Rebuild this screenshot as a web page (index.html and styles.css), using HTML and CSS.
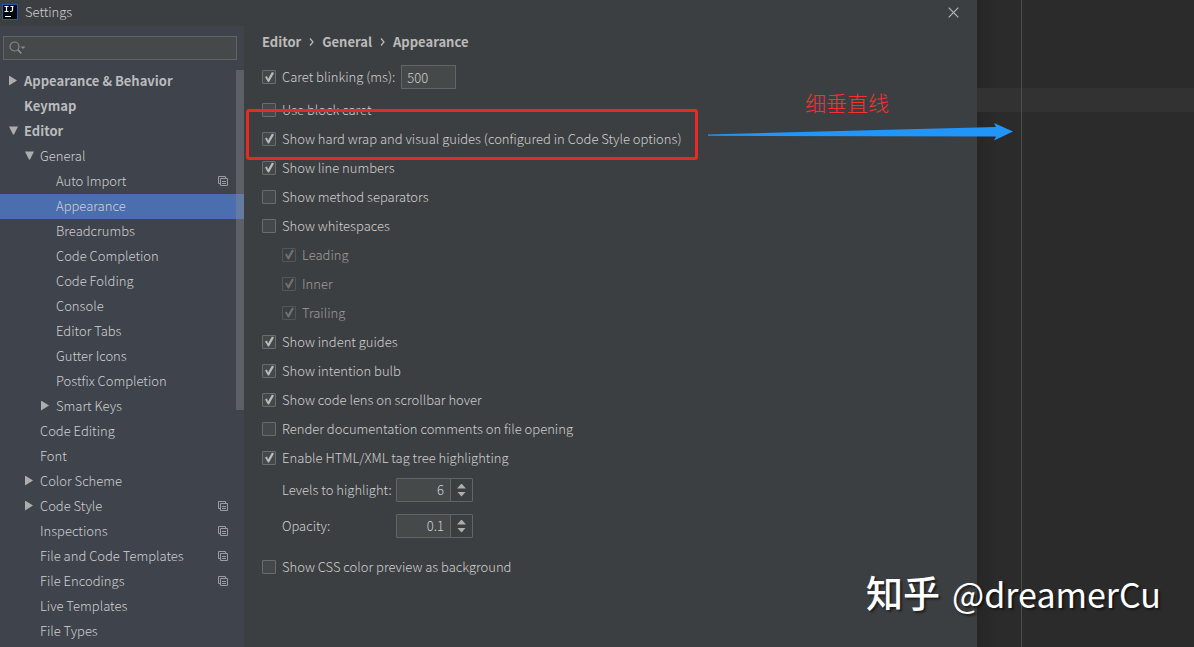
FILE: index.html
```
<!DOCTYPE html>
<html lang="en">
<head>
    <meta charset="UTF-8">
    <title>Settings</title>
    <meta name="viewport" content="width=device-width, initial-scale=1.0">
    <link rel="stylesheet" href="styles.css">
</head>
<body>
<svg class="defs" width="0" height="0">
    <symbol id="copy" viewBox="0 0 10 10">
        <path d="M2 7.5H.5V.5h7V2M2.5 2.5h7v7h-7zM4 5.5h4M4 7.5h4" fill="none" stroke="currentColor"/>
    </symbol>
</svg>
<div class="screen">
    <div class="dialog">
        <div class="titlebar">
            <svg class="logo" width="16" height="16" viewBox="0 0 16 16">
                <rect width="16" height="16" fill="#1f5fae"/>
                <rect x="1" y="1" width="14" height="14" fill="#05080f"/>
                <path d="M2.500 2.500h4M4.500 2.500v5M2.500 7.500h4M8.500 2.500h3M10.500 2v4q0 1.500-1.500 1.500H8M3 12.500h6" fill="none" stroke="#fff" stroke-width="1.200"/>
            </svg>
            <span class="title">Settings</span>
            <button class="close" aria-label="Close">
                <svg width="11" height="11" viewBox="0 0 11 11"><path d="M.7.7l9.600 9.600M10.300.7L.7 10.300" stroke="#b4b7b9" stroke-width="1.200"/></svg>
            </button>
        </div>
        <div class="main">
            <div class="sidebar">
                <div class="search">
                    <svg width="18" height="14" viewBox="0 0 18 14">
                        <circle cx="5.500" cy="5.500" r="4.500" fill="none" stroke="#87898b" stroke-width="1.200"/>
                        <path d="M8.700 8.700L12.300 12.300" stroke="#87898b" stroke-width="1.800"/>
                        <path d="M11.500 5.500h5L14 8z" fill="#87898b"/>
                    </svg>
                    <input type="text" aria-label="Search settings">
                </div>
                <div class="tree">
                    <ul>
                        <li><a href="#" class="lv1 closed">Appearance &amp; Behavior</a></li>
                        <li><a href="#" class="lv1">Keymap</a></li>
                        <li><a href="#" class="lv1 opened">Editor</a></li>
                        <li><a href="#" class="lv2 opened">General</a></li>
                        <li><a href="#" class="lv3">Auto Import<svg class="copy"><use href="#copy"/></svg></a></li>
                        <li><a href="#" class="lv3 active">Appearance</a></li>
                        <li><a href="#" class="lv3">Breadcrumbs</a></li>
                        <li><a href="#" class="lv3">Code Completion</a></li>
                        <li><a href="#" class="lv3">Code Folding</a></li>
                        <li><a href="#" class="lv3">Console</a></li>
                        <li><a href="#" class="lv3">Editor Tabs</a></li>
                        <li><a href="#" class="lv3">Gutter Icons</a></li>
                        <li><a href="#" class="lv3">Postfix Completion</a></li>
                        <li><a href="#" class="lv3 closed">Smart Keys</a></li>
                        <li><a href="#" class="lv2">Code Editing</a></li>
                        <li><a href="#" class="lv2">Font</a></li>
                        <li><a href="#" class="lv2 closed">Color Scheme</a></li>
                        <li><a href="#" class="lv2 closed">Code Style<svg class="copy"><use href="#copy"/></svg></a></li>
                        <li><a href="#" class="lv2">Inspections<svg class="copy"><use href="#copy"/></svg></a></li>
                        <li><a href="#" class="lv2">File and Code Templates<svg class="copy"><use href="#copy"/></svg></a></li>
                        <li><a href="#" class="lv2">File Encodings<svg class="copy"><use href="#copy"/></svg></a></li>
                        <li><a href="#" class="lv2">Live Templates</a></li>
                        <li><a href="#" class="lv2">File Types</a></li>
                    </ul>
                    <div class="scrollbar"></div>
                </div>
            </div>
            <div class="content">
                <div class="crumbs">
                    <span>Editor</span>
                    <svg width="5" height="8" viewBox="0 0 5 8"><path d="M1 .5L4 4 1 7.500" fill="none" stroke="#bbb" stroke-width="1.200"/></svg>
                    <span>General</span>
                    <svg width="5" height="8" viewBox="0 0 5 8"><path d="M1 .5L4 4 1 7.500" fill="none" stroke="#bbb" stroke-width="1.200"/></svg>
                    <span>Appearance</span>
                </div>
                <div class="caret">
                    <label class="option"><input type="checkbox" checked>Caret blinking (ms):</label>
                    <input type="text" class="field" value="500" aria-label="Caret blinking (ms)">
                </div>
                <label class="option"><input type="checkbox">Use block caret</label>
                <label class="option"><input type="checkbox" checked>Show hard wrap and visual guides (configured in Code Style options)</label>
                <label class="option"><input type="checkbox" checked>Show line numbers</label>
                <label class="option"><input type="checkbox">Show method separators</label>
                <label class="option"><input type="checkbox">Show whitespaces</label>
                <div class="sub">
                    <label class="option"><input type="checkbox" checked disabled>Leading</label>
                    <label class="option"><input type="checkbox" checked disabled>Inner</label>
                    <label class="option"><input type="checkbox" checked disabled>Trailing</label>
                </div>
                <label class="option"><input type="checkbox" checked>Show indent guides</label>
                <label class="option"><input type="checkbox" checked>Show intention bulb</label>
                <label class="option"><input type="checkbox" checked>Show code lens on scrollbar hover</label>
                <label class="option"><input type="checkbox">Render documentation comments on file opening</label>
                <label class="option"><input type="checkbox" checked>Enable HTML/XML tag tree highlighting</label>
                <div class="sub spinners">
                    <label for="levels">Levels to highlight:</label>
                    <div class="spinner">
                        <input type="text" id="levels" value="6">
                        <div class="arrows">
                            <button class="up" aria-label="More levels"></button>
                            <button class="down" aria-label="Fewer levels"></button>
                        </div>
                    </div>
                    <label for="opacity">Opacity:</label>
                    <div class="spinner">
                        <input type="text" id="opacity" value="0.1">
                        <div class="arrows">
                            <button class="up" aria-label="More opacity"></button>
                            <button class="down" aria-label="Less opacity"></button>
                        </div>
                    </div>
                </div>
                <label class="option"><input type="checkbox">Show CSS color preview as background</label>
            </div>
        </div>
    </div>
    <div class="editor">
        <div class="caret-line"></div>
        <div class="guide"></div>
    </div>

    <!-- notes drawn over the window -->
    <div class="frame"></div>
    <p class="note" lang="zh">细垂直线</p>
    <svg class="arrow" width="306" height="20" viewBox="0 0 306 20">
        <path d="M0 12.500L288 5 286 1 305 9.500 286 18.500 288 14.500 0 13.800z" fill="#2196f8"/>
    </svg>
    <p class="watermark" lang="zh"><b>知乎</b> @dreamerCu</p>
</div>
</body>
</html>
```
FILE: styles.css
```
*{margin: 0;padding: 0;box-sizing: border-box;}
html,body{
    overflow: hidden;
    height: 100vh;
}
body{
    background-color: #2b2b2b;
    color: #d0d0d0;
    font: 300 13px/18px "Noto Sans CJK SC",sans-serif;
}
ul{list-style: none;}
a{color: inherit;text-decoration: none;}
button{border: none;background: none;}
input{
    color: #d0d0d0;
    font: inherit;
    outline: none;
}
.defs{position: absolute;}

.screen{
    position: relative;
    display: flex;
    height: 100vh;
}
.dialog{
    flex: 1;
    display: flex;
    flex-direction: column;
    background-color: #3c3f41;
}

/* title bar */
.titlebar{
    display: flex;
    align-items: center;
    height: 26px;
    padding: 0 18px 2px 2px;
}
.titlebar .title{
    flex: 1;
    margin-left: 7px;
}
.titlebar .close{
    display: flex;
}
.main{
    flex: 1;
    display: flex;
    min-height: 0;
}

/* sidebar */
.sidebar{
    width: 244px;
    padding-top: 10px;
    background-color: #3e434c;
}
.search{
    display: flex;
    align-items: center;
    height: 24px;
    margin: 0 7px 9px 3px;
    padding-left: 5px;
    border: 1px solid #646464;
    background-color: #45494a;
}
.search input{
    flex: 1;
    min-width: 0;
    border: none;
    background: none;
}
.tree{position: relative;}
.tree a{
    display: flex;
    align-items: center;
    height: 25px;
    padding-right: 16px;
    padding-bottom: 2px;
}
.tree a::before{
    content: "";
    width: 10px;
    height: 10px;
    margin-right: 6px;
}
.tree .closed::before{
    background-color: #adadad;
    clip-path: polygon(1px 0,9px 5px,1px 10px);
}
.tree .opened::before{
    background-color: #adadad;
    clip-path: polygon(1px 1px,10px 1px,6px 9px,5px 9px);
}
.tree .lv1{
    padding-left: 8px;
    color: #bbbbbb;
    font-weight: bold;
}
.tree .lv2{padding-left: 24px;}
.tree .lv3{padding-left: 40px;}
.tree .active{background-color: #4b6eaf;}
.tree .copy{
    width: 10px;
    height: 10px;
    margin-left: auto;
    color: #9a9da1;
}
.scrollbar{
    position: absolute;
    top: 1px;
    right: 0;
    width: 8px;
    height: 340px;
    background-color: rgba(140,140,144,.4);
}

/* content */
.content{
    flex: 1;
    padding: 4px 18px;
}
.crumbs{
    display: flex;
    align-items: center;
    height: 24px;
    gap: 8px;
    color: #bbbbbb;
    font-weight: bold;
}
.caret{
    display: flex;
    align-items: center;
    gap: 6px;
    height: 41px;
    padding-top: 5px;
}
.option{
    display: flex;
    align-items: center;
    gap: 6px;
    height: 29px;
}
.option input{
    appearance: none;
    width: 14px;
    height: 14px;
    border: 1px solid #6b6b6b;
    border-radius: 1px;
    background-color: #43494a;
}
.option input:checked::before{
    content: "";
    display: block;
    width: 12px;
    height: 12px;
    background-color: #bbbbbb;
    clip-path: polygon(2px 6px,4px 5px,5px 8px,9px 1px,11px 2px,6px 11px,5px 11px);
}
.option input:disabled{
    border-color: #545556;
    background-color: #3c3f41;
}
.option input:disabled::before{background-color: #6e7072;}
.option:has(input:disabled){color: #9c9c9c;}
.field{
    width: 55px;
    height: 24px;
    padding: 0 5px;
    border: 1px solid #646464;
    background-color: #45494a;
}
.sub{padding-left: 20px;}
.spinners{
    display: grid;
    grid-template-columns: 108px 77px;
    align-items: center;
    gap: 12px 6px;
    padding-top: 6px;
    padding-bottom: 14px;
    white-space: nowrap;
}
.spinner{
    display: flex;
    height: 24px;
    border: 1px solid #646464;
    border-radius: 1px;
}
.spinner input{
    width: 54px;
    padding-right: 6px;
    border: none;
    border-right: 1px solid #646464;
    background-color: #45494a;
    text-align: right;
}
.arrows{
    flex: 1;
    display: flex;
    flex-direction: column;
    align-items: center;
    justify-content: center;
    gap: 3px;
}
.arrows button{
    width: 9px;
    height: 5px;
    background-color: #adadad;
}
.arrows .up{clip-path: polygon(50% 0,100% 100%,0 100%);}
.arrows .down{clip-path: polygon(0 0,100% 0,50% 100%);}

/* editor behind the dialog */
.editor{
    position: relative;
    width: 217px;
    padding-top: 88px;
    background: linear-gradient(90deg,#262626,#2b2b2b 20px);
}
.caret-line{
    height: 24px;
    background-color: #323232;
}
.guide{
    position: absolute;
    top: 0;
    bottom: 0;
    left: 44px;
    width: 1px;
    background-color: #4d4d4d;
}

/* notes */
.frame{
    position: absolute;
    top: 109px;
    left: 246px;
    width: 452px;
    height: 51px;
    border: 3px solid #e62b24;
    border-radius: 3px;
}
.note{
    position: absolute;
    top: 87px;
    left: 805px;
    color: #f83030;
    font: 300 21px/30px "Noto Sans CJK SC",sans-serif;
}
.arrow{
    position: absolute;
    top: 122px;
    left: 708px;
}
.watermark{
    position: absolute;
    right: 33px;
    bottom: 29px;
    display: flex;
    align-items: baseline;
    gap: 12px;
    color: #fff;
    font: 34px/48px "Noto Sans CJK SC",sans-serif;
    text-shadow: 2px 2px 2px rgba(0,0,0,.5);
}
.watermark b{font-size: 37px;font-weight: 500;}
```
